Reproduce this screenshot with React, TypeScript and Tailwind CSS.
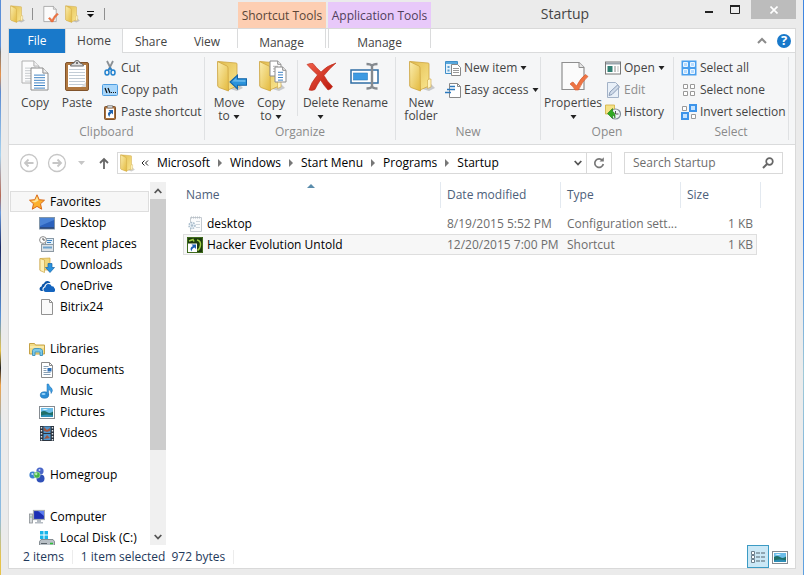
import React from "react";

type IconProps = { className?: string };

function Folder({ className = "h-8 w-8" }: IconProps) {
  return (
    <svg viewBox="0 0 32 32" className={className} aria-hidden="true">
      <defs>
        <linearGradient id="folderFront" x1="0" x2="1" y1="0" y2="1">
          <stop offset="0" stopColor="#fbeeb0" />
          <stop offset="1" stopColor="#e3b93c" />
        </linearGradient>
        <linearGradient id="folderBack" x1="0" x2="1" y1="0" y2="1">
          <stop offset="0" stopColor="#e2bd4e" />
          <stop offset="1" stopColor="#f9e58f" />
        </linearGradient>
      </defs>
      <path d="M14 28 L24 31 L30 28 L24 22 Z" fill="#000" opacity=".18" />
      <path d="M5 1.500 L23 3 Q24 3 24 4 L24 26 L15 30 L5 26 Z" fill="url(#folderBack)" stroke="#cda541" strokeWidth=".8" />
      <path d="M22.500 20 Q24 18.500 26 19 V27 L22.500 28.500 Z" fill="#fff3bf" stroke="#cda541" strokeWidth=".6" />
      <path d="M4.500 1.500 L14 6 Q15 6.500 15 8 L15.500 31 L6 27.500 Q5 27 4.800 26 Z" fill="url(#folderFront)" stroke="#cda541" strokeWidth=".8" />
    </svg>
  );
}

function Sheet({ x, y, w, h, lines, color }: { x: number; y: number; w: number; h: number; lines: number; color: string }) {
  const f = w * 0.3;
  return (
    <g>
      <path d={`M${x} ${y}h${w - f}l${f} ${f}v${h - f}h${-w}z`} fill="#fff" stroke="#8c8c8c" strokeWidth="1" />
      <path d={`M${x + w - f} ${y}v${f}h${f}`} fill="#eee" stroke="#8c8c8c" strokeWidth="1" />
      {Array.from({ length: lines }, (_, i) => (
        <path key={i} d={`M${x + 3} ${y + f + 2 + i * 2.6}h${w - 6}`} stroke={color} strokeWidth="1" />
      ))}
    </g>
  );
}

function CopyIcon() {
  return (
    <svg viewBox="0 0 32 32" className="h-8 w-8" aria-hidden="true">
      <g opacity=".65"><Sheet x={3} y={1} w={17} h={22} lines={6} color="#b0b5ba" /></g>
      <Sheet x={12} y={8} w={17} h={22} lines={6} color="#3f83c4" />
    </svg>
  );
}

function PasteIcon() {
  return (
    <svg viewBox="0 0 32 32" className="h-8 w-8" aria-hidden="true">
      <rect x="4.500" y="2.500" width="23" height="28" rx="1.500" fill="#b07840" stroke="#80532b" />
      <rect x="7" y="5" width="18" height="22" fill="#fff" />
      <path d="M8 9.500h16M8 12.500h16M8 15.500h16M8 18.500h16M8 21.500h16M8 24.500h16" stroke="#c3cdd6" />
      <path d="M20 27l5-5v5z" fill="#ddd" />
      <path d="M9.500 6q0-2.500 3.500-3q.5-2.500 3-2.500t3 2.500q3.500.5 3.500 3z" fill="#dcdcdc" stroke="#666" />
      <circle cx="16" cy="3" r="1" fill="#555" />
    </svg>
  );
}

function MoveIcon() {
  return (
    <div className="relative h-8 w-8">
      <Folder />
      <svg viewBox="0 0 17 15" className="absolute -right-0.5 bottom-0.5 h-4 w-4.5" aria-hidden="true">
        <path d="M1 7.500L8 1v3.500h8.500v6H8V14z" fill="#2b93db" stroke="#1565a8" />
        <path d="M3 7L7 3.500v2h8.500v2z" fill="#7cc4f2" opacity=".7" />
      </svg>
    </div>
  );
}

function CopyToIcon() {
  return (
    <div className="relative h-8 w-8">
      <Folder />
      <svg viewBox="0 0 32 32" className="absolute inset-0 h-8 w-8" aria-hidden="true">
        <Sheet x={15} y={1} w={11} h={15} lines={3} color="#b5b5b5" />
        <Sheet x={20} y={7} w={11} h={15} lines={4} color="#3f83c4" />
      </svg>
    </div>
  );
}

function DeleteIcon() {
  return (
    <svg viewBox="0 0 32 32" className="h-8 w-8" aria-hidden="true">
      <defs>
        <linearGradient id="crossRed" x1="0" x2="1" y1="0" y2="1">
          <stop offset="0" stopColor="#f0604a" />
          <stop offset="1" stopColor="#b81408" />
        </linearGradient>
      </defs>
      <path d="M2 4.500q3-1.500 6-1q3 4 8 8.500Q22 5.500 31 3q-7 6-12 12.500q3 6 8.500 11q-1 2.500-4.500 3.500q-4.500-5-7.500-10q-3.500 5-5.500 9.500q-3 1.500-6 .5q2-7.500 8.500-15Q7 10 2 4.500z" fill="url(#crossRed)" stroke="#bb2a1a" strokeWidth=".6" />
    </svg>
  );
}

function RenameIcon() {
  return (
    <svg viewBox="0 0 32 32" className="h-8 w-8" aria-hidden="true">
      <rect x="2" y="10" width="27" height="13" fill="#fff" stroke="#2f6ea5" strokeWidth="1.500" />
      <rect x="4.500" y="13" width="14" height="7" fill="#3d9ae2" stroke="#2b7cc0" strokeWidth=".6" />
      <path d="M17.500 4q4.500 0 5.500 2q1-2 5.500-2M17.500 28.500q4.500 0 5.500-2q1 2 5.500 2M23 5v22" fill="none" stroke="#858a8f" strokeWidth="2.400" />
    </svg>
  );
}

function PropertiesIcon({ className = "h-8 w-8" }: IconProps) {
  return (
    <svg viewBox="0 0 32 32" className={className} aria-hidden="true">
      <path d="M5 2.500h17l5 5v22H5z" fill="#fbfbfb" stroke="#8f8f8f" strokeWidth="1.200" />
      <path d="M22 2.500v5h5" fill="#e6e6e6" stroke="#8f8f8f" />
      <path d="M13 24q2-2 3-2l3.500 4q4-8 9-11.500l2.500 2q-6 5-9.500 13.500h-3.500q-2-4-5-6z" fill="#ee7443" stroke="#d2562a" strokeWidth=".6" />
    </svg>
  );
}

function Caret() {
  return (
    <svg viewBox="0 0 7 4" className="inline-block h-1 w-[7px] shrink-0 align-middle" aria-hidden="true">
      <path d="M.5 0h6L3.500 4z" fill="#222" />
    </svg>
  );
}

function Svg16({ children, className = "h-4 w-4 shrink-0" }: { children: React.ReactNode; className?: string }) {
  return <svg viewBox="0 0 16 16" className={className} aria-hidden="true">{children}</svg>;
}

const icons: Record<string, React.ReactNode> = {
  cut: (
    <Svg16>
      <path d="M5 1l4.500 9M11 1L6.500 10" stroke="#8a8f94" strokeWidth="1.800" />
      <ellipse cx="5" cy="12.500" rx="2" ry="2.500" fill="none" stroke="#2583cf" strokeWidth="1.500" />
      <ellipse cx="11" cy="12.500" rx="2" ry="2.500" fill="none" stroke="#2583cf" strokeWidth="1.500" />
      <path d="M6 10.500L8 8l2 2.500" stroke="#2583cf" strokeWidth="1.500" fill="none" />
    </Svg16>
  ),
  path: (
    <Svg16>
      <rect x=".5" y="2.500" width="15" height="11" rx="1" fill="#a9d7fb" stroke="#4f9de0" />
      <path d="M3 6l2 5M6 6l2 5" stroke="#111" strokeWidth="1.200" />
      <path d="M9 10.500h1M11 10.500h1M13 10.500h1" stroke="#111" />
    </Svg16>
  ),
  shortcut: (
    <Svg16>
      <rect x="2.500" y="2.500" width="11" height="13" rx="1" fill="#a9703c" stroke="#80532b" />
      <rect x="4" y="4.500" width="8" height="9.500" fill="#fff" />
      <path d="M5.500 1.500h5v2.500h-5z" fill="#ccc" stroke="#777" strokeWidth=".6" />
      <path d="M6.500 6H11v4.500L9.600 9q-2 1-2.200 4-3.200-3.700.5-5.600z" fill="#1e63b0" />
    </Svg16>
  ),
  newItem: (
    <Svg16>
      <path d="M.5 1.500h12v12H.5z" fill="#e6f2fb" stroke="#3f8fc9" />
      <path d="M1 3h11" stroke="#58a7dc" strokeWidth="2" />
      <path d="M2.500 6h2v2h-2zM2.500 9.500h2v2h-2z" fill="#5b9fd0" />
      <path d="M6.500 4.500h6l3 3v8h-9z" fill="#fff" stroke="#888" />
      <path d="M8 8.500h6M8 10.500h6M8 12.500h6" stroke="#999" />
    </Svg16>
  ),
  easy: (
    <Svg16>
      <path d="M4.500 1.500h8l3 3v11h-11z" fill="#fff" stroke="#888" />
      <path d="M12.500 1.500v3h3" fill="none" stroke="#888" />
      <path d="M5 4.500h5M2 7.500h8M0 10.500h6" stroke="#2b78bd" strokeWidth="1.400" />
    </Svg16>
  ),
  open: (
    <Svg16>
      <rect x=".5" y="2" width="15" height="12" fill="#fff" stroke="#777" />
      <path d="M1 3.500h14" stroke="#9aa5ad" strokeWidth="2" />
      <path d="M2.500 6h5v6h-5z" fill="#2f7f72" />
      <path d="M9 7h2M9 9h2M9 11h2" stroke="#888" />
      <path d="M12 6h2v6h-2z" fill="#ddd" />
    </Svg16>
  ),
  edit: (
    <Svg16>
      <path d="M2.500.5h8l3 3v12h-11z" fill="#e9f0f8" stroke="#a3b2c7" />
      <path d="M4 13.500L5 10l7.500-7 2 2L7 12.500z" fill="#d0dbe9" stroke="#8c9db7" />
    </Svg16>
  ),
  history: (
    <Svg16>
      <path d="M.5 1h9v9h-9z" fill="#f5e287" stroke="#cfae3f" strokeWidth=".8" />
      <circle cx="10.500" cy="10" r="5" fill="#eef3f6" stroke="#85919a" strokeWidth="1.200" />
      <path d="M10.500 7v3h3" stroke="#555" fill="none" />
      <path d="M2.500 9.500l5-5v3q3 1 2.500 6.500-.8-3-2.500-3v3.500z" fill="#2faa22" stroke="#1b7a14" strokeWidth=".6" />
    </Svg16>
  ),
  all: (
    <Svg16>
      <path d="M.5.5h15v15H.5z" fill="#4ba0ee" />
      <path d="M2.500 2.500h4v4h-4zM9.500 2.500h4v4h-4zM2.500 9.500h4v4h-4zM9.500 9.500h4v4h-4z" fill="#b8dcff" stroke="#eef7ff" />
    </Svg16>
  ),
  none: (
    <Svg16>
      <path d="M2.500 2.500h4v4h-4zM9.500 2.500h4v4h-4zM2.500 9.500h4v4h-4zM9.500 9.500h4v4h-4z" fill="#fff" stroke="#999" />
    </Svg16>
  ),
  invert: (
    <Svg16>
      <path d="M1.500 2.500h4v4h-4zM10.500 10.500h4v4h-4z" fill="#fff" stroke="#999" />
      <path d="M9 1h6v6H9zM1 9h6v6H1z" fill="#c5e3ff" stroke="#3d94ea" strokeWidth="2" />
    </Svg16>
  ),
  star: (
    <Svg16>
      <path d="M8 .8l2.200 4.900 5.300.5-4 3.600 1.200 5.400L8 12.400l-4.700 2.800 1.200-5.400-4-3.600 5.300-.5z" fill="#fbb02c" stroke="#d9691a" />
      <path d="M8 2.500l1.500 4-3.500 2-4-1.500 4-.6z" fill="#ffe59a" />
    </Svg16>
  ),
  desktop: (
    <Svg16>
      <rect x=".5" y="2.500" width="15" height="11.500" fill="#2b62bd" stroke="#8195a9" />
      <path d="M1 3h14v2L1 11z" fill="#4a83d6" />
      <path d="M1 13h14" stroke="#28374f" />
    </Svg16>
  ),
  recent: (
    <Svg16>
      <rect x="6.500" y="2.500" width="8" height="6" fill="#dfeffa" stroke="#8898a6" />
      <path d="M8 4.500h5M8 6.500h4" stroke="#3b82c4" />
      <rect x="2.500" y="8.500" width="12" height="7" fill="#dde3e8" stroke="#8d99a3" />
      <path d="M4 10.500h9v2H4z" fill="#6ea3cd" />
      <circle cx="4" cy="4" r="3.400" fill="#fff" stroke="#8c8c8c" />
      <path d="M4 2v2h2" fill="none" stroke="#555" />
    </Svg16>
  ),
  downloads: (
    <Svg16>
      <path d="M1 1.500l10-.5v12H1z" fill="#f0d77b" stroke="#cda541" strokeWidth=".7" />
      <path d="M1 1.500L5.500 3v12.500L1 13.500z" fill="#fbefb5" stroke="#cda541" strokeWidth=".7" />
      <path d="M9 6.500h4v4h2.500L11 15.500 6.500 10.500H9z" fill="#2a93df" stroke="#1766a8" strokeWidth=".7" />
    </Svg16>
  ),
  onedrive: (
    <Svg16>
      <path d="M4.500 13H2.300Q.4 12.500.5 10.700Q.7 9 2.500 8.600Q2.600 6 5 5.600Q5.700 3.300 8 3q2.500-.2 3.600 2Q6 4.500 5.300 8.500 3 9.500 3.400 11.500q.3 1 1.100 1.500z" fill="#0b55a8" />
      <path d="M6.500 14q-2-.2-2.100-2.300 0-2 2-2.400Q6.600 6.200 9.500 6q2.300 0 3.200 2.300 2.600-.2 2.600 1.900 1.200.5.900 2-.2 1.500-1.700 1.800z" fill="#1464be" />
    </Svg16>
  ),
  file: (
    <Svg16>
      <path d="M2.500.5h8l3 3v12h-11z" fill="#fafafa" stroke="#929292" />
      <path d="M10.500.5v3h3" fill="none" stroke="#929292" />
    </Svg16>
  ),
  libraries: (
    <Svg16>
      <path d="M.5 2.500h5l1 1.500h9v9H.5z" fill="#f3dc86" stroke="#c6a347" />
      <path d="M1 6h14" stroke="#fff6c8" />
      <path d="M3.500 14.500V9.500Q4 7.500 6 7.500h4.500q2.500 0 3 2v5H11v-3.500H6v3.500z" fill="#7cc8e8" stroke="#3c91bb" strokeWidth=".9" />
    </Svg16>
  ),
  documents: (
    <Svg16>
      <path d="M2.500.5h8l3 3v12h-11z" fill="#fff" stroke="#8a8a8a" />
      <path d="M10.500.5v3h3" fill="none" stroke="#8a8a8a" />
      <path d="M4.500 4.500h5M4.500 6.500h3M4.500 8.500h3M4.500 10.500h7M4.500 12.500h7" stroke="#8aa0b4" />
      <path d="M8.500 6h4v3.500h-4z" fill="#2c6fb8" />
    </Svg16>
  ),
  music: (
    <Svg16>
      <ellipse cx="5.500" cy="12" rx="4.200" ry="3.200" fill="#2b8dd6" stroke="#1a6db0" strokeWidth=".6" />
      <path d="M8 12V1h1.600q.4 2.600 2.900 4 2 2.500-.4 5.500.3-3-2.500-4V12z" fill="#3d9ee3" stroke="#1a6db0" strokeWidth=".5" />
      <ellipse cx="4.500" cy="11" rx="2" ry="1" fill="#9ed6fa" />
    </Svg16>
  ),
  pictures: (
    <Svg16>
      <rect x=".5" y="2.500" width="15" height="12" fill="#fff" stroke="#858b91" />
      <path d="M2 4h12v5H2z" fill="#6bbde9" />
      <path d="M2 8q3-2 6 0t6-.5V13H2z" fill="#1f6f68" />
      <path d="M2 11.500q6-2 12 0V13H2z" fill="#2e8fb7" />
      <path d="M3 6q3-2 6 0z" fill="#e5f6ff" />
    </Svg16>
  ),
  videos: (
    <Svg16>
      <path d="M1 1h14v15H1z" fill="#2b3440" />
      <path d="M2.500 2v14M13.500 2v14" stroke="#dfe5ea" strokeWidth="1.400" strokeDasharray="1.500 1.500" />
      <path d="M4.500 1.500h7v6.500h-7zM4.500 9h7v6h-7z" fill="#5096ce" />
      <path d="M5 2l3 3 3-2v3l-3 1-3-1zM5 14l3-4 3 3z" fill="#a4563c" />
    </Svg16>
  ),
  homegroup: (
    <Svg16>
      <circle cx="3.800" cy="8" r="3.400" fill="#3a80cf" />
      <circle cx="11" cy="4" r="3.600" fill="#4a66c8" />
      <circle cx="11.500" cy="11.500" r="4" fill="#2f50b8" />
      <circle cx="8" cy="8" r="3.200" fill="#46b648" stroke="#dff2df" strokeWidth=".5" />
      <circle cx="7.200" cy="7" r="1.200" fill="#b6ecb0" />
      <circle cx="10.500" cy="3" r="1" fill="#c8d8ff" />
      <circle cx="3.300" cy="7" r="1" fill="#c9e4ff" />
    </Svg16>
  ),
  computer: (
    <Svg16>
      <rect x=".5" y="5" width="3" height="9" fill="#d5d9dc" stroke="#8a8f94" strokeWidth=".8" />
      <path d="M1.500 8h1" stroke="#3aa83a" />
      <rect x="4.500" y="1.500" width="11" height="9" fill="#1b2fb4" stroke="#a4abb3" strokeWidth="1.200" />
      <path d="M9 2l6 0v5z" fill="#5c7df0" />
      <path d="M8 11h4v2h2v1.500H6V13h2z" fill="#b5bcc3" />
    </Svg16>
  ),
  disk: (
    <Svg16>
      <path d="M1 1h3.500v3.500H1zM5.500 1H9v3.500H5.500zM1 5.500h3.500V9H1zM5.500 5.500H9V9H5.500z" fill="#18b5ea" />
      <path d="M2 9.500h12l1.500 2v4H.5v-4z" fill="#b9c0c6" stroke="#70787f" strokeWidth=".8" />
      <path d="M2 13.500h6" stroke="#5b646b" />
      <path d="M11 13.500h3" stroke="#2fbf3a" strokeWidth="1.500" />
    </Svg16>
  ),
  config: (
    <Svg16>
      <path d="M3.500 1.500h11v14h-11z" fill="#fafbfc" stroke="#c5cbd1" />
      <path d="M4 1.500h10" stroke="#b9c1c8" strokeDasharray="1 1" strokeWidth="2" />
      <path d="M9 5.500h4M9 8.500h4M9 11.500h4" stroke="#cdd5dc" />
      <circle cx="5" cy="9.500" r="3" fill="#e8f0f6" stroke="#a9bccb" strokeWidth="1.500" strokeDasharray="1.500 1" />
      <circle cx="5" cy="9.500" r="1.200" fill="#a9bccb" />
    </Svg16>
  ),
  game: (
    <Svg16>
      <path d="M0 0h16v16H0z" fill="#1c3c0d" />
      <path d="M.5.500h15v15H.5z" fill="none" stroke="#3f6b1c" />
      <path d="M2 4l4-1.500 1 2M10 3q4 1 3.500 5-.5 4-3 5.500" fill="none" stroke="#9fce45" strokeWidth="1.500" />
      <path d="M1 6.500h9V15H1z" fill="#fff" />
      <path d="M4.500 7.500h4.500V12L7.500 10.500Q5 11 4.500 14.500q-2.500-4 1.500-5.500z" fill="#1e5fb5" />
    </Svg16>
  ),
};

function BigButton({ icon, label, caret, wide }: { icon: React.ReactNode; label: string; caret?: boolean; wide?: boolean }) {
  return (
    <button type="button" className={`flex shrink-0 flex-col items-center ${wide ? "w-14" : "w-[42px]"}`}>
      {icon}
      <span className="mt-1 whitespace-pre leading-[13px]">
        {label}
        {caret && <Caret />}
      </span>
    </button>
  );
}

function SmallButton({ icon, label, caret, disabled }: { icon: string; label: string; caret?: boolean; disabled?: boolean }) {
  return (
    <button type="button" disabled={disabled} className="flex h-[22px] items-center gap-[3px] whitespace-nowrap disabled:text-[#8d8d8d]">
      {icons[icon]}
      <span>{label}</span>
      {caret && <Caret />}
    </button>
  );
}

function Group({ label, width, children }: { label: string; width: string; children: React.ReactNode }) {
  return (
    <section aria-label={label} className={`my-1 flex shrink-0 flex-col justify-between border-r border-[#dfe1e3] ${width}`}>
      <div className="flex items-start">{children}</div>
      <div className="text-center leading-4 text-[#8a8a8a]">{label}</div>
    </section>
  );
}

function TitleBar() {
  return (
    <header className="flex h-7 items-start">
      <div className="flex h-7 w-[230px] shrink-0 items-center">
        <Folder className="h-[18px] w-[18px]" />
        <span className="ml-1.5 h-3 w-px bg-[#8f8f8f]" />
        <button type="button" aria-label="Properties" className="ml-2"><PropertiesIcon className="h-[18px] w-[18px]" /></button>
        <button type="button" aria-label="New folder" className="ml-1"><Folder className="h-[18px] w-[18px]" /></button>
        <button type="button" aria-label="Customize toolbar" className="ml-0.5 p-1">
          <svg viewBox="0 0 7 7" className="h-[7px] w-[7px]"><path d="M0 .5h7" stroke="#111" /><path d="M0 3h7L3.500 6.500z" fill="#111" /></svg>
        </button>
        <span className="ml-1.5 h-3 w-px bg-[#8f8f8f]" />
      </div>
      <div className="mt-0.5 flex shrink-0 gap-0.5 text-center leading-[28px]">
        <div className="h-[26px] w-[88px] bg-[#fdceb2] text-[#5a4638]">Shortcut Tools</div>
        <div className="h-[26px] w-[103px] bg-[#e8c9fa] text-[#4f405a]">Application Tools</div>
      </div>
      <h1 className="flex-1 text-center text-sm leading-7 text-[#444]">Startup</h1>
      <div className="flex items-start">
        <button type="button" aria-label="Minimize" className="flex h-5 w-5 items-center justify-center">
          <svg viewBox="0 0 10 10" className="h-2.5 w-2.5"><path d="M1 7h8" stroke="#222" strokeWidth="2" /></svg>
        </button>
        <button type="button" aria-label="Maximize" className="flex h-5 w-8 items-center justify-center">
          <svg viewBox="0 0 12 12" className="h-3 w-3"><path d="M1.500 2.500h9v7h-9z" fill="none" stroke="#222" /><path d="M1 2h10" stroke="#222" strokeWidth="2" /></svg>
        </button>
        <button type="button" aria-label="Close" className="flex h-[19px] w-[45px] items-center justify-center bg-[#bcbcbc]">
          <svg viewBox="0 0 8 8" className="h-2 w-2"><path d="M.5.5l7 7M7.500.5l-7 7" stroke="#fff" strokeWidth="1.600" /></svg>
        </button>
      </div>
    </header>
  );
}

function Tabs() {
  return (
    <nav className="flex h-6 text-[#444]">
      <button type="button" className="w-14 bg-[#1979ca] text-white">File</button>
      <button type="button" className="w-[58px] border-x border-[#dadbdc] bg-[#f5f6f7]">Home</button>
      <div className="flex flex-1 border-b border-[#dadbdc]">
        <button type="button" className="w-14 pt-0.5">Share</button>
        <button type="button" className="w-14 pt-0.5">View</button>
        <div className="ml-0.5 flex gap-0.5">
          <button type="button" className="h-[19px] w-[89px] border-x border-[#dadbdc] pt-2 leading-3">Manage</button>
          <button type="button" className="h-[19px] w-[103px] border-x border-[#dadbdc] pt-2 leading-3">Manage</button>
        </div>
        <div className="ml-auto flex items-center gap-2.5 pr-1">
          <button type="button" aria-label="Collapse ribbon">
            <svg viewBox="0 0 10 7" className="h-[7px] w-2.5"><path d="M1 6l4-4 4 4" fill="none" stroke="#8b8b8b" strokeWidth="2" /></svg>
          </button>
          <button type="button" aria-label="Help" className="flex h-3.5 w-3.5 items-center justify-center rounded-full bg-[#1979ca] text-[13px] font-bold leading-none text-white">?</button>
        </div>
      </div>
    </nav>
  );
}

function Ribbon() {
  return (
    <div className="flex h-[92px] border-b border-[#dadbdc] bg-[#f5f6f7] text-[#444]">
      <Group label="Clipboard" width="w-[196px]">
        <div className="flex pl-[5px] pt-[3px]">
          <BigButton icon={<CopyIcon />} label="Copy" />
          <BigButton icon={<PasteIcon />} label="Paste" />
        </div>
        <div className="ml-1">
          <SmallButton icon="cut" label="Cut" />
          <SmallButton icon="path" label="Copy path" />
          <SmallButton icon="shortcut" label="Paste shortcut" />
        </div>
      </Group>
      <Group label="Organize" width="w-[191px]">
        <div className="flex pl-[3px] pt-[3px]">
          <BigButton icon={<MoveIcon />} label={"Move\nto "} caret />
          <BigButton icon={<CopyToIcon />} label={"Copy\nto "} caret />
          <span className="ml-[5px] mr-0.5 h-14 w-px bg-[#dfe1e3]" />
          <BigButton icon={<DeleteIcon />} label={"Delete\n"} caret />
          <span className="w-0.5" />
          <BigButton icon={<RenameIcon />} label="Rename" />
        </div>
      </Group>
      <Group label="New" width="w-[145px]">
        <div className="pl-1 pt-[3px]">
          <BigButton icon={<Folder />} label={"New\nfolder"} />
        </div>
        <div className="ml-[3px]">
          <SmallButton icon="newItem" label="New item" caret />
          <SmallButton icon="easy" label="Easy access" caret />
        </div>
      </Group>
      <Group label="Open" width="w-[133px]">
        <div className="pl-1 pt-[3px]">
          <BigButton icon={<PropertiesIcon />} label={"Properties\n"} caret wide />
        </div>
        <div className="ml-1">
          <SmallButton icon="open" label="Open" caret />
          <SmallButton icon="edit" label="Edit" disabled />
          <SmallButton icon="history" label="History" />
        </div>
      </Group>
      <Group label="Select" width="w-[115px]">
        <div className="ml-[7px]">
          <SmallButton icon="all" label="Select all" />
          <SmallButton icon="none" label="Select none" />
          <SmallButton icon="invert" label="Invert selection" />
        </div>
      </Group>
    </div>
  );
}

const crumbs = ["Microsoft", "Windows", "Start Menu", "Programs", "Startup"];

function AddressBar() {
  return (
    <div className="flex items-center pb-2 pl-2.5 pr-3 pt-[7px]">
      <button type="button" aria-label="Back">
        <svg viewBox="0 0 20 20" className="h-5 w-5"><circle cx="10" cy="10" r="8.500" fill="none" stroke="#c6c6c6" strokeWidth="1.300" /><path d="M14.500 10H6M9.500 6.500L6 10l3.500 3.500" fill="none" stroke="#c6c6c6" strokeWidth="1.800" /></svg>
      </button>
      <button type="button" aria-label="Forward" className="ml-2">
        <svg viewBox="0 0 20 20" className="h-5 w-5"><circle cx="10" cy="10" r="8.500" fill="none" stroke="#c6c6c6" strokeWidth="1.300" /><path d="M5.500 10H14M10.500 6.500L14 10l-3.500 3.500" fill="none" stroke="#c6c6c6" strokeWidth="1.800" /></svg>
      </button>
      <button type="button" aria-label="Recent locations" className="ml-[11px]">
        <svg viewBox="0 0 7 4" className="h-1 w-[7px]"><path d="M0 0h7L3.500 4z" fill="#c6c6c6" /></svg>
      </button>
      <button type="button" aria-label="Up" className="ml-3.5">
        <svg viewBox="0 0 10 12" className="h-3 w-2.5"><path d="M5 12V2M1 6l4-4 4 4" fill="none" stroke="#666" strokeWidth="1.800" /></svg>
      </button>
      <div className="ml-2 flex h-[22px] flex-1 items-center border border-[#d9d9d9]">
        <Folder className="h-[18px] w-[18px]" />
        <svg viewBox="0 0 8 6" className="ml-[5px] h-1.5 w-2"><path d="M3.500.5L1 3l2.500 2.500M7 .5L4.500 3 7 5.500" fill="none" stroke="#222" /></svg>
        <nav className="ml-2 flex flex-1 items-center gap-2">
          {crumbs.map((c, i) => (
            <React.Fragment key={c}>
              {i > 0 && <svg viewBox="0 0 4 8" className="h-2 w-1"><path d="M0 0l4 4-4 4z" fill="#777" /></svg>}
              <button type="button" className="whitespace-nowrap">{c}</button>
            </React.Fragment>
          ))}
        </nav>
        <button type="button" aria-label="Previous locations" className="px-1">
          <svg viewBox="0 0 8 6" className="h-1.5 w-2"><path d="M.7 1L4 4.500 7.300 1" fill="none" stroke="#555" strokeWidth="1.800" /></svg>
        </button>
        <button type="button" aria-label="Refresh" className="flex h-full w-[25px] items-center justify-center border-l border-[#d9d9d9]">
          <svg viewBox="0 0 12 12" className="h-3 w-3"><path d="M9.500 3.500A4.300 4.300 0 1 0 10.300 7" fill="none" stroke="#777" strokeWidth="1.700" /><path d="M6.500 4.500h4.300V.3z" fill="#777" /></svg>
        </button>
      </div>
      <label className="ml-3 flex h-[22px] w-[159px] items-center border border-[#d9d9d9] px-2">
        <input type="search" aria-label="Search Startup" placeholder="Search Startup" className="min-w-0 flex-1 bg-transparent outline-none placeholder:text-[#6d6d6d]" />
        <svg viewBox="0 0 12 12" className="h-3 w-3"><circle cx="7.500" cy="4.500" r="3.300" fill="none" stroke="#666" strokeWidth="1.700" /><path d="M5 7L1 11" stroke="#666" strokeWidth="2" /></svg>
      </label>
    </div>
  );
}

type Node = { icon: string; label: string };
const tree: { root: Node; items: Node[] }[] = [
  {
    root: { icon: "star", label: "Favorites" },
    items: [
      { icon: "desktop", label: "Desktop" },
      { icon: "recent", label: "Recent places" },
      { icon: "downloads", label: "Downloads" },
      { icon: "onedrive", label: "OneDrive" },
      { icon: "file", label: "Bitrix24" },
    ],
  },
  {
    root: { icon: "libraries", label: "Libraries" },
    items: [
      { icon: "documents", label: "Documents" },
      { icon: "music", label: "Music" },
      { icon: "pictures", label: "Pictures" },
      { icon: "videos", label: "Videos" },
    ],
  },
  { root: { icon: "homegroup", label: "Homegroup" }, items: [] },
  { root: { icon: "computer", label: "Computer" }, items: [{ icon: "disk", label: "Local Disk (C:)" }] },
];

function Sidebar() {
  return (
    <aside className="flex w-[157px] shrink-0 gap-px pl-px">
      <div className="flex min-w-0 flex-1 flex-col gap-[21px] overflow-hidden pt-[9px]">
        {tree.map((section, s) => (
          <ul key={section.root.label}>
            <li>
              <button type="button" className={`flex h-[21px] w-full items-center gap-[5px] border pl-[18px] ${s === 0 ? "border-[#dedede] bg-[#f7f7f7]" : "border-transparent"}`}>
                {icons[section.root.icon]}
                {section.root.label}
              </button>
            </li>
            {section.items.map((n) => (
              <li key={n.label}>
                <button type="button" className="flex h-[21px] w-full items-center gap-[5px] whitespace-nowrap pl-[29px]">
                  {icons[n.icon]}
                  {n.label}
                </button>
              </li>
            ))}
          </ul>
        ))}
      </div>
      <div className="flex w-4 flex-col bg-[#f0f0f0]">
        <button type="button" aria-label="Scroll up" className="flex h-[17px] items-center justify-center">
          <svg viewBox="0 0 8 6" className="h-1.5 w-2"><path d="M.7 5L4 1.500 7.300 5" fill="none" stroke="#555" strokeWidth="1.800" /></svg>
        </button>
        <div className="h-[76%] max-h-[251px] flex-none bg-[#cdcdcd]" />
        <button type="button" aria-label="Scroll down" className="mt-auto flex h-[17px] items-center justify-center">
          <svg viewBox="0 0 8 6" className="h-1.5 w-2"><path d="M.7 1L4 4.500 7.300 1" fill="none" stroke="#555" strokeWidth="1.800" /></svg>
        </button>
      </div>
    </aside>
  );
}

const files = [
  { icon: "config", name: "desktop", date: "8/19/2015 5:52 PM", type: "Configuration sett...", size: "1 KB", selected: false },
  { icon: "game", name: "Hacker Evolution Untold", date: "12/20/2015 7:00 PM", type: "Shortcut", size: "1 KB", selected: true },
];

function FileList() {
  const th = "h-[26px] border-r border-[#e3e9f0] pl-1.5 text-left font-normal";
  return (
    <main className="min-w-0 flex-1 pl-[17px]">
      <table className="w-[578px] table-fixed border-separate border-spacing-0">
        <colgroup>
          <col /><col className="w-[120px]" /><col className="w-[120px]" /><col className="w-[76px]" /><col className="w-1" />
        </colgroup>
        <thead className="text-[#4c607a]">
          <tr>
            <th className={`${th} relative pl-[3px]`}>
              Name
              <svg viewBox="0 0 8 4" className="absolute inset-x-0 top-0.5 mx-auto h-1 w-2"><path d="M0 4L4 0l4 4z" fill="#5a8cab" /></svg>
            </th>
            <th className={th}>Date modified</th>
            <th className={th}>Type</th>
            <th className={th} colSpan={2}>Size</th>
          </tr>
          <tr aria-hidden="true"><td className="h-[5px]" colSpan={5} /></tr>
        </thead>
        <tbody>
          {files.map((f) => {
            const cell = f.selected ? "h-[21px] border-y border-[#dedede] bg-[#f7f7f7]" : "h-[21px] border-y border-transparent";
            return (
              <tr key={f.name} className="whitespace-nowrap text-[#6d6d6d]">
                <td className={`${cell} border-l pl-[3px]`}>
                  <div className="flex items-center gap-1 text-black">{icons[f.icon]}{f.name}</div>
                </td>
                <td className={`${cell} pl-1.5`}>{f.date}</td>
                <td className={`${cell} pl-1.5`}>{f.type}</td>
                <td className={`${cell} border-r pr-[3px] text-right`}>{f.size}</td>
                <td />
              </tr>
            );
          })}
        </tbody>
      </table>
    </main>
  );
}

function StatusBar() {
  return (
    <footer className="flex h-[23px] items-center pl-3.5 pr-1 text-[#1e395b]">
      <span>2 items</span>
      <span className="mx-2 h-3.5 w-px bg-[#ececec]" />
      <span>1 item selected</span>
      <span className="ml-1.5">972 bytes</span>
      <span className="ml-2 h-3.5 w-px bg-[#ececec]" />
      <button type="button" aria-label="Details view" className="ml-auto flex h-[23px] w-[22px] items-center justify-center border border-[#3c9bc4] bg-[#cbe8f6]">
        <Svg16>
          <path d="M1.500 2.500h3v3h-3zM1.500 6.500h3v3h-3zM1.500 10.500h3v3h-3z" fill="#fff" stroke="#6d7f8c" />
          <path d="M6 4h4M11 4h4M6 8h4M11 8h4M6 12h4M11 12h4" stroke="#55656f" />
        </Svg16>
      </button>
      <button type="button" aria-label="Large icons view" className="flex h-[23px] w-[22px] items-center justify-center">
        {icons.pictures}
      </button>
    </footer>
  );
}

export default function App() {
  return (
    <div className="flex h-screen bg-[#ebebeb] font-['Open_Sans','Noto_Sans',sans-serif] text-xs text-black">
      <div className="w-px bg-[linear-gradient(#5b8fd8_8%,#777_9%,#e8924a_13%,#5a8bd2_16%,#a9d3ee_27%,#b86a55_34%,#6b9bdc_37%,#1d2c66_43%,#5b93d6_55%,#e7c34a_61%,#222_64%,#f0a44a_67%,#7fb4e0_75%,#8fbce0_90%,#e7c34a_97%)]" />
      <div className="flex min-w-0 flex-1 flex-col">
        <div className="px-[7px]"><TitleBar /></div>
        <div className="mx-[7px] mb-[6px] flex min-h-0 flex-1 flex-col border border-[#d9d9d9] bg-white">
          <Tabs />
          <Ribbon />
          <AddressBar />
          <div className="flex min-h-0 flex-1">
            <Sidebar />
            <FileList />
          </div>
          <StatusBar />
        </div>
      </div>
      <div className="w-px bg-linear-to-b from-[#3f86e0] from-40% via-[#9fc9d8] via-65% to-[#5c9fe0]" />
    </div>
  );
}
